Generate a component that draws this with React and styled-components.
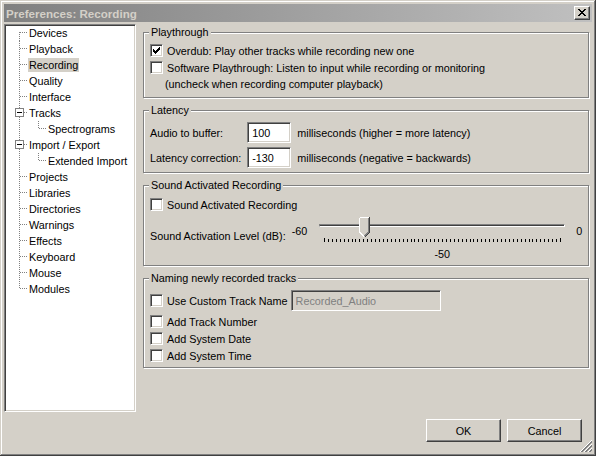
import React from 'react';
import styled, { createGlobalStyle } from 'styled-components';

const GlobalStyle = createGlobalStyle`
  html, body { margin: 0; padding: 0; background: #d4d0c8; }
  body {
    font-family: "Liberation Sans", Arial, sans-serif;
    font-size: 10.8px;
    color: #000;
  }
  * { box-sizing: border-box; }
`;

const Frame = styled.div`
  width: 596px;
  height: 456px;
  padding: 4px;
  background: #d4d0c8;
  box-shadow: inset -1px -1px 0 #404040, inset 1px 1px 0 #d4d0c8,
    inset -2px -2px 0 #808080, inset 2px 2px 0 #fff;
  display: flex;
  flex-direction: column;
`;

const TitleBar = styled.div`
  height: 18px;
  display: flex;
  align-items: center;
  justify-content: space-between;
  padding: 0 2px;
  background: linear-gradient(to right, #808080, #c0c0c0);
`;

const Title = styled.span`
  font-weight: bold;
  font-size: 11.6px;
  color: #d4d0c8;
`;

const CloseButton = styled.button`
  width: 16px;
  height: 14px;
  padding: 0;
  margin: 0 0 1px;
  background: #d4d0c8;
  border: 1px solid;
  border-color: #fff #404040 #404040 #fff;
  box-shadow: inset -1px -1px 0 #808080;
  display: flex;
  align-items: center;
  justify-content: center;
`;

const Client = styled.div`
  flex: 1;
  display: flex;
  flex-direction: column;
  position: relative;
`;

const Main = styled.div`
  display: flex;
  padding-top: 2px;
  height: 390px;
`;

const Tree = styled.ul`
  flex: none;
  width: 132px;
  height: 388px;
  margin: 0;
  padding: 0 1px 1px;
  list-style: none;
  background: #fff;
  border: 1px solid;
  border-color: #808080 #fff #fff #808080;
  box-shadow: inset 1px 1px 0 #404040, inset -1px -1px 0 #d4d0c8;
`;

const TreeRow = styled.li`
  display: flex;
  align-items: flex-start;
  height: 16px;
`;

const NodeLabel = styled.span`
  margin-top: 1px;
  height: 14px;
  line-height: 14px;
  padding: 0 1px;
  white-space: nowrap;
  background: ${(p) => (p.$selected ? '#d4d0c8' : 'transparent')};
`;

const Pages = styled.div`
  flex: 1;
  min-width: 0;
  margin-left: 7px;
  padding: 8px 3px 0 0;
  display: flex;
  flex-direction: column;
  gap: 12px;
`;

const GroupBox = styled.div`
  display: flex;
  flex-direction: column;
  padding: 0 6px ${(p) => p.$pb ?? 4}px;
  border: 1px solid #808080;
  box-shadow: inset 1px 1px 0 #fff, 1px 1px 0 #fff;
`;

const Caption = styled.div`
  align-self: flex-start;
  margin: -7px 0 3px -1px;
  padding: 0 2px;
  line-height: 13px;
  background: #d4d0c8;
`;

const CheckRow = styled.div`
  display: flex;
  align-items: center;
  height: ${(p) => p.$h ?? 17}px;
  margin-top: ${(p) => p.$mt ?? 0}px;
  white-space: nowrap;
`;

const Box = styled.span`
  width: 13px;
  height: 13px;
  flex: none;
  margin-right: 4px;
  background: #fff;
  border: 1px solid;
  border-color: #808080 #fff #fff #808080;
  box-shadow: inset 1px 1px 0 #404040, inset -1px -1px 0 #d4d0c8;
  display: flex;
  align-items: center;
  justify-content: center;
`;

const Note = styled.div`
  height: 17px;
  line-height: 17px;
  padding-left: 15px;
`;

const LatencyGrid = styled.div`
  display: grid;
  grid-template-columns: max-content 44px max-content;
  justify-content: start;
  grid-auto-rows: 21px;
  column-gap: 6px;
  row-gap: 4px;
  align-items: center;
  margin-top: 2px;
  white-space: nowrap;
`;

const Field = styled.input`
  width: ${(p) => p.$w}px;
  height: 21px;
  margin: 0;
  padding: 0 4px;
  font: inherit;
  color: ${(p) => (p.disabled ? '#808080' : '#000')};
  background: ${(p) => (p.disabled ? '#d4d0c8' : '#fff')};
  border: 1px solid;
  border-color: #808080 #fff #fff #808080;
  box-shadow: inset 1px 1px 0 #404040, inset -1px -1px 0 #d4d0c8;
  outline: none;
`;

const NameField = styled(Field)`
  margin-left: 3px;
`;

const LevelRow = styled.div`
  display: flex;
  align-items: flex-start;
  height: 46px;
  margin-top: 2px;
  white-space: nowrap;
`;

const LevelLabel = styled.span`
  margin-top: 15px;
  line-height: 13px;
`;

const RangeEnd = styled.span`
  margin-top: 10px;
  margin-left: ${(p) => p.$ml}px;
  line-height: 13px;
`;

const Slider = styled.div`
  width: 246px;
  margin: 0 11px 0 12px;
  display: flex;
  flex-direction: column;
`;

const Channel = styled.div`
  position: relative;
  height: 22px;
  padding-top: 9px;
`;

const Track = styled.div`
  height: 3px;
  background: #404040;
  border: 1px solid;
  border-color: #808080 #fff #fff #808080;
`;

const Thumb = styled.svg`
  position: absolute;
  top: 2px;
`;

const Ticks = styled.svg`
  display: block;
  margin-top: 1px;
`;

const ValueLabel = styled.div`
  margin-top: 6px;
  line-height: 13px;
  text-align: center;
`;

const Footer = styled.div`
  display: flex;
  justify-content: flex-end;
  gap: 6px;
  padding: 7px 10px 10px 0;
`;

const Button = styled.button`
  width: 75px;
  height: 23px;
  margin: 0;
  padding: 0;
  font: inherit;
  color: #000;
  background: #d4d0c8;
  border: 1px solid;
  border-color: #fff #404040 #404040 #fff;
  box-shadow: inset -1px -1px 0 #808080;
`;

const Grip = styled.svg`
  position: absolute;
  right: 0;
  bottom: 0;
`;

const treeItems = [
  { label: 'Devices', first: true },
  { label: 'Playback' },
  { label: 'Recording', selected: true },
  { label: 'Quality' },
  { label: 'Interface' },
  { label: 'Tracks', toggle: true },
  { label: 'Spectrograms', depth: 1 },
  { label: 'Import / Export', toggle: true },
  { label: 'Extended Import', depth: 1 },
  { label: 'Projects' },
  { label: 'Libraries' },
  { label: 'Directories' },
  { label: 'Warnings' },
  { label: 'Effects' },
  { label: 'Keyboard' },
  { label: 'Mouse' },
  { label: 'Modules', last: true },
];

const TreeGuide = ({ depth, first, last, toggle }) => (
  <svg width={depth ? 41 : 22} height={16} style={{ flex: 'none' }}>
    <g stroke="#808080" strokeDasharray="1 1" shapeRendering="crispEdges">
      <line x1={13.5} y1={first ? 7 : 0} x2={13.5} y2={last ? 8 : 16} />
      {!depth && <line x1={14} y1={7.5} x2={22} y2={7.5} />}
      {depth === 1 && <line x1={32.5} y1={0} x2={32.5} y2={8} />}
      {depth === 1 && <line x1={33} y1={7.5} x2={41} y2={7.5} />}
    </g>
    {toggle && (
      <g shapeRendering="crispEdges">
        <rect x={9.5} y={3.5} width={8} height={8} fill="#fff" stroke="#808080" />
        <line x1={11} y1={7.5} x2={16} y2={7.5} stroke="#000" />
      </g>
    )}
  </svg>
);

const CheckMark = () => (
  <svg width={7} height={7} viewBox="0 0 7 7">
    <path
      d="M0 2h1v3H0z M1 3h1v3H1z M2 4h1v3H2z M3 3h1v3H3z M4 2h1v3H4z M5 1h1v3H5z M6 0h1v3H6z"
      fill="#000"
    />
  </svg>
);

const CloseGlyph = () => (
  <svg width={8} height={7} viewBox="0 0 8 7">
    <path
      d="M0 0h2v1H0z M6 0h2v1H6z M1 1h2v1H1z M5 1h2v1H5z M2 2h4v1H2z M3 3h2v1H3z M2 4h4v1H2z M1 5h2v1H1z M5 5h2v1H5z M0 6h2v1H0z M6 6h2v1H6z"
      fill="#000"
    />
  </svg>
);

const Check = ({ checked, children, ...rest }) => (
  <CheckRow {...rest}>
    <Box>{checked && <CheckMark />}</Box>
    <span>{children}</span>
  </CheckRow>
);

const LevelSlider = ({ min, max, value }) => {
  const span = 236;
  const frac = (value - min) / (max - min);
  const ticks = [];
  for (let i = 0; i <= max - min; i++) {
    const x = 5 + Math.round((i * span) / (max - min)) + 0.5;
    const edge = i === 0 || i === max - min;
    ticks.push(<line key={i} x1={x} y1={edge ? 0 : 1} x2={x} y2={4} />);
  }
  return (
    <>
      <RangeEnd $ml={6}>{min}</RangeEnd>
      <Slider>
        <Channel>
          <Track />
          <Thumb width={11} height={20} style={{ left: frac * span }} shapeRendering="crispEdges">
            <polygon points="0,0 11,0 11,15 6,20 5,20 0,15" fill="#d4d0c8" />
            <path d="M0.5 0.5H10 M0.5 0.5V15 M0.5 15L5 19.5" stroke="#fff" fill="none" />
            <path d="M10.5 0V15.5L5.5 20.5" stroke="#404040" fill="none" />
            <path d="M9.5 1V15L5.5 19" stroke="#808080" fill="none" />
          </Thumb>
        </Channel>
        <Ticks width={246} height={4} stroke="#000" shapeRendering="crispEdges">
          {ticks}
        </Ticks>
        <ValueLabel>{value}</ValueLabel>
      </Slider>
      <RangeEnd $ml={0}>{max}</RangeEnd>
    </>
  );
};

export default function App() {
  return (
    <>
      <GlobalStyle />
      <Frame>
        <TitleBar>
          <Title>Preferences: Recording</Title>
          <CloseButton aria-label="Close">
            <CloseGlyph />
          </CloseButton>
        </TitleBar>
        <Client>
          <Main>
            <Tree>
              {treeItems.map((item) => (
                <TreeRow key={item.label}>
                  <TreeGuide {...item} />
                  <NodeLabel $selected={item.selected}>{item.label}</NodeLabel>
                </TreeRow>
              ))}
            </Tree>
            <Pages>
              <GroupBox>
                <Caption>Playthrough</Caption>
                <Check checked>Overdub: Play other tracks while recording new one</Check>
                <Check>Software Playthrough: Listen to input while recording or monitoring</Check>
                <Note>(uncheck when recording computer playback)</Note>
              </GroupBox>
              <GroupBox>
                <Caption>Latency</Caption>
                <LatencyGrid>
                  <span>Audio to buffer:</span>
                  <Field $w={44} defaultValue="100" />
                  <span>milliseconds (higher = more latency)</span>
                  <span>Latency correction:</span>
                  <Field $w={44} defaultValue="-130" />
                  <span>milliseconds (negative = backwards)</span>
                </LatencyGrid>
              </GroupBox>
              <GroupBox>
                <Caption>Sound Activated Recording</Caption>
                <Check $mt={1}>Sound Activated Recording</Check>
                <LevelRow>
                  <LevelLabel>Sound Activation Level (dB):</LevelLabel>
                  <LevelSlider min={-60} max={0} value={-50} />
                </LevelRow>
              </GroupBox>
              <GroupBox $pb={3}>
                <Caption>Naming newly recorded tracks</Caption>
                <CheckRow $h={21} $mt={2}>
                  <Box />
                  <span>Use Custom Track Name</span>
                  <NameField $w={150} disabled defaultValue="Recorded_Audio" />
                </CheckRow>
                <Check $mt={2}>Add Track Number</Check>
                <Check>Add System Date</Check>
                <Check>Add System Time</Check>
              </GroupBox>
            </Pages>
          </Main>
          <Footer>
            <Button>OK</Button>
            <Button>Cancel</Button>
          </Footer>
          <Grip width={12} height={12} shapeRendering="crispEdges">
            {[0, 4, 8].map((o) => (
              <g key={o}>
                <line x1={12} y1={o} x2={o} y2={12} stroke="#fff" />
                <line x1={12} y1={o + 1} x2={o + 1} y2={12} stroke="#808080" />
                <line x1={12} y1={o + 2} x2={o + 2} y2={12} stroke="#808080" />
              </g>
            ))}
          </Grip>
        </Client>
      </Frame>
    </>
  );
}
